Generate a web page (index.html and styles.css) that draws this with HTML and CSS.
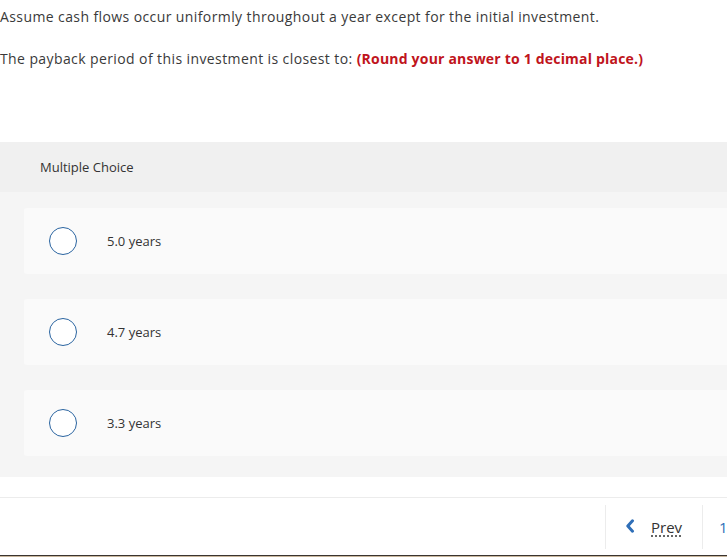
FILE: index.html
```html
<!DOCTYPE html>
<html>
<head>
<meta charset="utf-8">
<link rel="stylesheet" href="styles.css">
</head>
<body>
<div class="page">
  <p class="q q1">Assume cash flows occur uniformly throughout a year except for the initial investment.</p>
  <p class="q q2">The payback period of this investment is closest to: <strong class="hint">(Round your answer to 1 decimal place.)</strong></p>

  <section class="mc">
    <div class="mc-head">Multiple Choice</div>
    <div class="mc-body">
      <label class="opt"><span class="radio"></span><span class="opt-text">5.0 years</span></label>
      <label class="opt"><span class="radio"></span><span class="opt-text">4.7 years</span></label>
      <label class="opt"><span class="radio"></span><span class="opt-text">3.3 years</span></label>
    </div>
  </section>

  <footer class="nav">
    <div class="nav-spacer"></div>
    <div class="nav-item prev">
      <svg class="chev" width="10" height="14" viewBox="0 0 10 14"><path d="M7.5 1.8 L2.8 7 L7.5 12.2" fill="none" stroke="#2f6fb8" stroke-width="3" stroke-linecap="round" stroke-linejoin="round"/></svg>
      <span class="prev-text">Prev</span>
    </div>
    <div class="nav-item page-num">1</div>
  </footer>
  <div class="bottom-line"></div>
</div>
</body>
</html>
```
FILE: styles.css
```css
html, body {
  margin: 0;
  padding: 0;
  overflow: hidden;
  background: #fff;
}
body {
  font-family: "Open Sans", Lato, "Liberation Sans", sans-serif;
  color: #333;
}
.page {
  width: 727px;
  height: 557px;
  position: relative;
  overflow: hidden;
}
.q {
  margin: 0;
  font-size: 14px;
  line-height: 20px;
  letter-spacing: 0.4px;
  white-space: nowrap;
  color: #3a3a3a;
}
.q1 { padding-top: 7px; }
.q2 { padding-top: 22px; }
.hint {
  color: #c0141c;
  font-weight: 700;
  letter-spacing: 0.2px;
}
.mc {
  margin-top: 73px;
  width: 780px;
}
.mc-head {
  height: 50px;
  background: #f0f0f0;
  display: flex;
  align-items: center;
  padding-left: 40px;
  font-size: 13px;
  color: #333;
}
.mc-body {
  background: #f5f5f5;
  padding: 16px 0 21px 24px;
  display: flex;
  flex-direction: column;
  gap: 25px;
}
.opt {
  height: 66px;
  background: #fafafa;
  border-radius: 3px;
  display: flex;
  align-items: center;
  padding-left: 25px;
}
.radio {
  width: 28px;
  height: 28px;
  box-sizing: border-box;
  border: 1.5px solid #2a64a0;
  border-radius: 50%;
  background: #fff;
  flex: none;
}
.opt-text {
  margin-left: 30px;
  font-size: 13px;
  color: #333;
}
.nav {
  margin-top: 20px;
  width: 780px;
  border-top: 1px solid #ececec;
  height: 57px;
  display: flex;
  align-items: center;
}
.nav-spacer { flex: 1; }
.nav-item {
  height: 44px;
  display: flex;
  align-items: center;
  border-left: 1px solid #ececec;
  box-sizing: border-box;
  flex: none;
}
.prev {
  width: 97px;
  padding-left: 19px;
  gap: 16px;
}
.chev { display: block; margin-top: -2px; }
.prev-text {
  font-size: 15px;
  color: #333;
  text-decoration: underline dotted #333;
  text-underline-offset: 3px;
}
.page-num {
  width: 78px;
  padding-left: 16px;
  font-size: 15px;
  color: #2f6fb8;
}
.bottom-line {
  width: 780px;
  height: 1px;
  background: #3a3430;
  border-bottom: 1px solid #c8b69c;
}
```
